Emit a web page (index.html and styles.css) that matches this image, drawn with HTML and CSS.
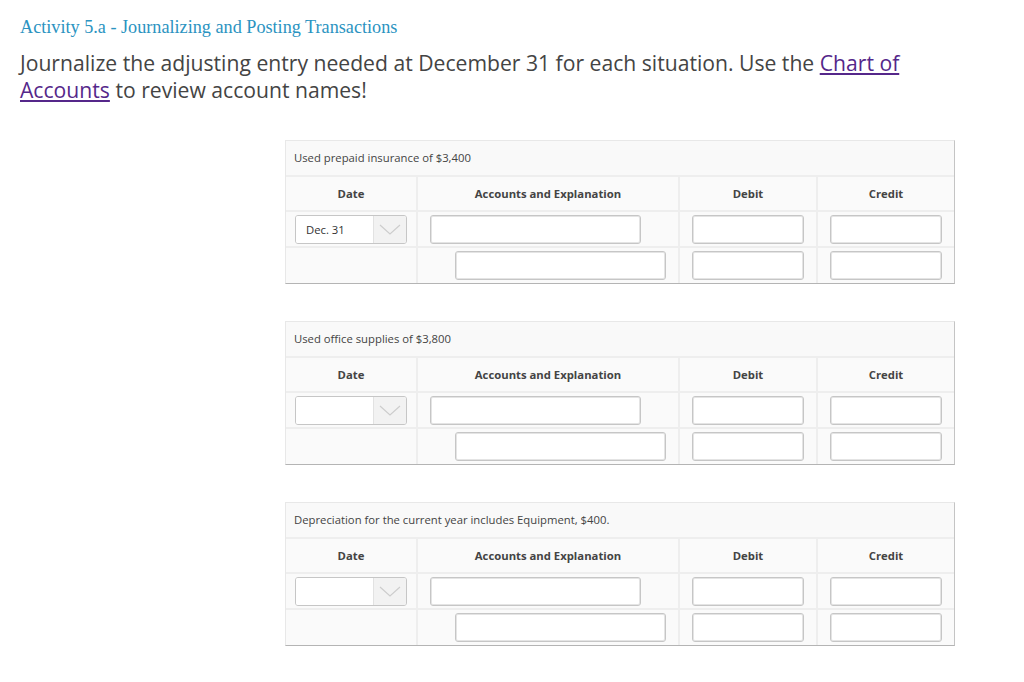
FILE: index.html
```html
<!DOCTYPE html>
<html lang="en">

<head>
    <meta charset="UTF-8">
    <title>Activity 5.a</title>
    <link rel="stylesheet" href="styles.css">
</head>

<body>
    <div class="page">
        <h1 class="activity_title">Activity 5.a - Journalizing and Posting Transactions</h1>
        <p class="question">Journalize the adjusting entry needed at December 31 for each situation. Use the <a href="javascript:;">Chart of Accounts</a> to review account names!</p>

        <div class="journal">
            <div class="journal_caption">Used prepaid insurance of $3,400</div>
            <div class="journal_grid">
                <div class="head">Date</div>
                <div class="head">Accounts and Explanation</div>
                <div class="head">Debit</div>
                <div class="head">Credit</div>
                <div class="cell date_cell">
                    <div class="date_select">
                        <span class="date_value">Dec. 31</span>
                        <span class="date_arrow"><svg width="22" height="11" viewBox="0 0 22 11"><polyline points="1,1 11,10 21,1" fill="none" stroke="#cdcdcd" stroke-width="1.2"/></svg></span>
                    </div>
                </div>
                <div class="cell"><div class="box acct"></div></div>
                <div class="cell"><div class="box amount"></div></div>
                <div class="cell"><div class="box amount"></div></div>
                <div class="cell"></div>
                <div class="cell"><div class="box acct indent"></div></div>
                <div class="cell"><div class="box amount"></div></div>
                <div class="cell"><div class="box amount"></div></div>
            </div>
        </div>

        <div class="journal">
            <div class="journal_caption">Used office supplies of $3,800</div>
            <div class="journal_grid">
                <div class="head">Date</div>
                <div class="head">Accounts and Explanation</div>
                <div class="head">Debit</div>
                <div class="head">Credit</div>
                <div class="cell date_cell">
                    <div class="date_select">
                        <span class="date_value"></span>
                        <span class="date_arrow"><svg width="22" height="11" viewBox="0 0 22 11"><polyline points="1,1 11,10 21,1" fill="none" stroke="#cdcdcd" stroke-width="1.2"/></svg></span>
                    </div>
                </div>
                <div class="cell"><div class="box acct"></div></div>
                <div class="cell"><div class="box amount"></div></div>
                <div class="cell"><div class="box amount"></div></div>
                <div class="cell"></div>
                <div class="cell"><div class="box acct indent"></div></div>
                <div class="cell"><div class="box amount"></div></div>
                <div class="cell"><div class="box amount"></div></div>
            </div>
        </div>

        <div class="journal">
            <div class="journal_caption">Depreciation for the current year includes Equipment, $400.</div>
            <div class="journal_grid">
                <div class="head">Date</div>
                <div class="head">Accounts and Explanation</div>
                <div class="head">Debit</div>
                <div class="head">Credit</div>
                <div class="cell date_cell">
                    <div class="date_select">
                        <span class="date_value"></span>
                        <span class="date_arrow"><svg width="22" height="11" viewBox="0 0 22 11"><polyline points="1,1 11,10 21,1" fill="none" stroke="#cdcdcd" stroke-width="1.2"/></svg></span>
                    </div>
                </div>
                <div class="cell"><div class="box acct"></div></div>
                <div class="cell"><div class="box amount"></div></div>
                <div class="cell"><div class="box amount"></div></div>
                <div class="cell"></div>
                <div class="cell"><div class="box acct indent"></div></div>
                <div class="cell"><div class="box amount"></div></div>
                <div class="cell"><div class="box amount"></div></div>
            </div>
        </div>
    </div>
</body>

</html>
```

FILE: styles.css
```css
html,body,h1,p,div {
    padding: 0;
    margin: 0;
    box-sizing: border-box;
}
body {
    background: #fff;
    font-family: "Open Sans", "Liberation Sans", sans-serif;
    color: #444;
}
.page {
    padding: 16px 0 0 20px;
}
.activity_title {
    font-family: "Liberation Serif", serif;
    font-weight: normal;
    font-size: 18.2px;
    line-height: 22px;
    color: #2b93c1;
}
.question {
    margin-top: 11px;
    width: 900px;
    font-size: 21.15px;
    line-height: 27px;
    color: #444;
}
.question a {
    color: #55278a;
    text-decoration: underline;
}
.journal {
    width: 670px;
    margin: 37px 0 0 265px;
    background: #f9f9f9;
    border: 1px solid #e8e8e8;
    border-right-color: #c4c4c4;
    border-bottom-color: #b4b4b4;
}
.journal + .journal {
    margin-top: 37px;
}
.journal_caption {
    height: 36px;
    line-height: 34px;
    padding-left: 8px;
    font-size: 11.3px;
    color: #444;
    border-bottom: 2px solid #eeeeee;
}
.journal_grid {
    display: grid;
    grid-template-columns: 130px 260px 136px 1fr;
    grid-template-rows: 33px 34px 35px;
    gap: 2px;
    background: #eeeeee;
}
.journal_grid > div {
    background: #fafafa;
}
.journal_grid .head {
    display: flex;
    align-items: center;
    justify-content: center;
    font-size: 11.3px;
    font-weight: bold;
    color: #444;
}
.journal_grid .cell {
    display: flex;
    align-items: center;
    padding-left: 12px;
}
.journal_grid .date_cell {
    padding-left: 9px;
}
.box {
    height: 29px;
    background: #fff;
    border: 1px solid #c6c6c6;
    border-radius: 3px;
    box-shadow: inset 0 0 0 1px #e4e4e4;
}
.box.acct {
    width: 211px;
}
.box.acct.indent {
    margin-left: 25px;
}
.box.amount {
    width: 112px;
}
.date_select {
    display: flex;
    width: 112px;
    height: 29px;
    border: 1px solid #c6c6c6;
    border-radius: 3px;
    overflow: hidden;
}
.date_value {
    width: 67px;
    background: #fff;
    font-size: 11.3px;
    line-height: 27px;
    padding-left: 10px;
    color: #333;
    border-right: 1px solid #e2e2e2;
}
.date_arrow {
    flex: 1;
    display: flex;
    align-items: center;
    justify-content: center;
    background: #f2f2f2;
}
```
